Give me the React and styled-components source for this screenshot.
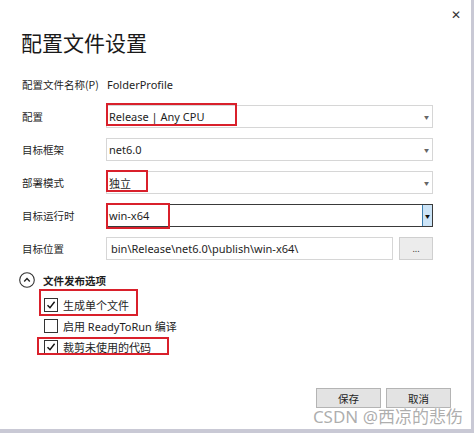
import styled, { createGlobalStyle } from "styled-components";

const GlobalStyle = createGlobalStyle`
  html, body {
    margin: 0;
    padding: 0;
    background: #c9c9d5;
  }
  body {
    font-family: "Noto Sans", "Noto Sans CJK SC", sans-serif;
    color: #1e1e1e;
  }
`;

const Window = styled.div`
  position: relative;
  width: 471px;
  height: 429px;
  background: #ffffff;
  display: flex;
  flex-direction: column;
  box-sizing: border-box;
`;

const TopBar = styled.div`
  height: 28px;
  display: flex;
  justify-content: flex-end;
  align-items: center;
  padding-right: 7px;
`;

const CloseButton = styled.span`
  font-size: 12px;
  color: #333;
  width: 16px;
  text-align: center;
`;

const Title = styled.h1`
  margin: 0;
  padding-left: 21px;
  font-size: 21px;
  line-height: 28px;
  font-weight: 400;
  font-family: "Noto Sans CJK SC", sans-serif;
  color: #1a1a1a;
`;

const ProfileRow = styled.div`
  margin-top: 18px;
  padding-left: 22px;
  height: 20px;
  display: flex;
  align-items: center;
  white-space: nowrap;
`;

const ProfileLabel = styled.span`
  width: 85px;
  font-size: 10.5px;
  font-family: "Noto Sans CJK SC", sans-serif;
`;

const ProfileValue = styled.span`
  font-size: 11px;
`;

const Form = styled.div`
  margin-top: 11px;
  padding-left: 22px;
  padding-right: 38px;
  display: grid;
  grid-template-columns: 84px 1fr;
  row-gap: 10px;
  align-items: center;
`;

const Label = styled.span`
  font-size: 10.5px;
  white-space: nowrap;
  font-family: "Noto Sans CJK SC", sans-serif;
`;

const Field = styled.div`
  position: relative;
  height: 23px;
  display: flex;
  align-items: stretch;
  gap: 6px;
`;

const Combo = styled.div`
  flex: 1;
  display: flex;
  align-items: center;
  box-sizing: border-box;
  border: 1px solid ${({ $focused }) => ($focused ? "#3a3a3a" : "#d6d6d6")};
  background: #fff;
  padding-left: 2px;
  font-size: 11px;
  font-family: "Noto Sans", "Noto Sans CJK SC", sans-serif;
`;

const ComboText = styled.span`
  flex: 1;
`;

const Arrow = styled.span`
  width: 10px;
  align-self: stretch;
  display: flex;
  align-items: center;
  justify-content: center;
  font-size: 5px;
  box-sizing: border-box;
  margin-right: ${({ $focused }) => ($focused ? "0" : "1px")};
  background: ${({ $focused }) => ($focused ? "#cce4f7" : "transparent")};
  border-left: 1px solid ${({ $focused }) => ($focused ? "#3c7fb1" : "transparent")};
  color: ${({ $focused }) => ($focused ? "#111" : "#666")};
`;

const TextBox = styled.div`
  flex: 1;
  display: flex;
  align-items: center;
  box-sizing: border-box;
  border: 1px solid #d6d6d6;
  padding-left: 4px;
  font-size: 11px;
`;

const BrowseButton = styled.div`
  width: 34px;
  box-sizing: border-box;
  border: 1px solid #cfcfcf;
  background: #ececec;
  display: flex;
  align-items: center;
  justify-content: center;
  font-size: 9px;
  color: #333;
`;

const Highlight = styled.div`
  position: absolute;
  left: ${({ $left }) => $left || 0}px;
  top: ${({ $top }) => $top}px;
  width: ${({ $w }) => $w}px;
  height: ${({ $h }) => $h}px;
  border: 2px solid #d9202b;
  box-sizing: border-box;
  pointer-events: none;
`;

const SectionHeader = styled.div`
  margin-top: 11px;
  padding-left: 19px;
  height: 18px;
  display: flex;
  align-items: center;
  gap: 8px;
`;

const CollapseIcon = styled.span`
  width: 16px;
  height: 16px;
  display: flex;
  align-items: center;
  justify-content: center;
`;

const SectionTitle = styled.span`
  font-size: 10.5px;
  font-weight: 700;
  font-family: "Noto Sans CJK SC", sans-serif;
`;

const CheckList = styled.div`
  margin-top: 6px;
  padding-left: 44px;
  display: flex;
  flex-direction: column;
  gap: 1px;
`;

const CheckRow = styled.div`
  position: relative;
  height: 20px;
  display: flex;
  align-items: center;
  gap: 5px;
  font-size: 11px;
  font-family: "Noto Sans", "Noto Sans CJK SC", sans-serif;
`;

const Box = styled.span`
  width: 14px;
  height: 14px;
  box-sizing: border-box;
  border: 1px solid #333;
  background: #fff;
  display: flex;
  align-items: center;
  justify-content: center;
`;

const Footer = styled.div`
  margin-top: auto;
  padding: 0 20px 21px 0;
  display: flex;
  justify-content: flex-end;
  gap: 5px;
`;

const Button = styled.button`
  width: 65px;
  height: 20px;
  padding: 0;
  border: 1px solid #b4b4b4;
  background: #e3e3e3;
  font-size: 10.5px;
  font-family: "Noto Sans CJK SC", sans-serif;
  color: #1e1e1e;
`;

const Watermark = styled.div`
  position: absolute;
  right: 8px;
  bottom: 2px;
  font-size: 17px;
  line-height: 20px;
  color: rgba(160, 160, 160, 0.85);
  text-shadow: 0 0 2px #fff;
  font-family: "Noto Sans", "Noto Sans CJK SC", sans-serif;
  pointer-events: none;
`;

const Check = () => (
  <svg width="10" height="10" viewBox="0 0 10 10">
    <path d="M1.5 5.2 L4 7.8 L8.6 1.8" fill="none" stroke="#111" strokeWidth="1.4" />
  </svg>
);

const Chevron = () => (
  <svg width="16" height="16" viewBox="0 0 16 16">
    <circle cx="8" cy="8" r="7.3" fill="none" stroke="#333" strokeWidth="1.1" />
    <path d="M5.2 9.4 L8 6.6 L10.8 9.4" fill="none" stroke="#222" strokeWidth="1.4" />
  </svg>
);

const rows = [
  { label: "配置", value: "Release | Any CPU", hl: { top: -2, w: 131, h: 23 } },
  { label: "目标框架", value: "net6.0" },
  { label: "部署模式", value: "独立", hl: { top: -1, w: 42, h: 22 } },
  { label: "目标运行时", value: "win-x64", focused: true, hl: { top: -1, w: 64, h: 26 } },
];

const options = [
  { text: "生成单个文件", checked: true, hl: { left: -5, top: -6, w: 99, h: 27 } },
  { text: "启用 ReadyToRun 编译", checked: false },
  { text: "裁剪未使用的代码", checked: true, hl: { left: -7, top: 0, w: 132, h: 18 } },
];

const App = () => {
  return (
    <>
      <GlobalStyle />
      <Window>
        <TopBar>
          <CloseButton>✕</CloseButton>
        </TopBar>
        <Title>配置文件设置</Title>
        <ProfileRow>
          <ProfileLabel>配置文件名称(P)</ProfileLabel>
          <ProfileValue>FolderProfile</ProfileValue>
        </ProfileRow>
        <Form>
          {rows.map((r) => (
            <>
              <Label key={r.label + "l"}>{r.label}</Label>
              <Field key={r.label + "f"}>
                <Combo $focused={r.focused}>
                  <ComboText>{r.value}</ComboText>
                  <Arrow $focused={r.focused}>▼</Arrow>
                </Combo>
                {r.hl && <Highlight $top={r.hl.top} $w={r.hl.w} $h={r.hl.h} />}
              </Field>
            </>
          ))}
          <Label>目标位置</Label>
          <Field>
            <TextBox>bin\Release\net6.0\publish\win-x64\</TextBox>
            <BrowseButton>...</BrowseButton>
          </Field>
        </Form>
        <SectionHeader>
          <CollapseIcon>
            <Chevron />
          </CollapseIcon>
          <SectionTitle>文件发布选项</SectionTitle>
        </SectionHeader>
        <CheckList>
          {options.map((o) => (
            <CheckRow key={o.text}>
              <Box>{o.checked && <Check />}</Box>
              <span>{o.text}</span>
              {o.hl && <Highlight $left={o.hl.left} $top={o.hl.top} $w={o.hl.w} $h={o.hl.h} />}
            </CheckRow>
          ))}
        </CheckList>
        <Footer>
          <Button>保存</Button>
          <Button>取消</Button>
        </Footer>
        <Watermark>CSDN @西凉的悲伤</Watermark>
      </Window>
    </>
  );
};

export default App;
